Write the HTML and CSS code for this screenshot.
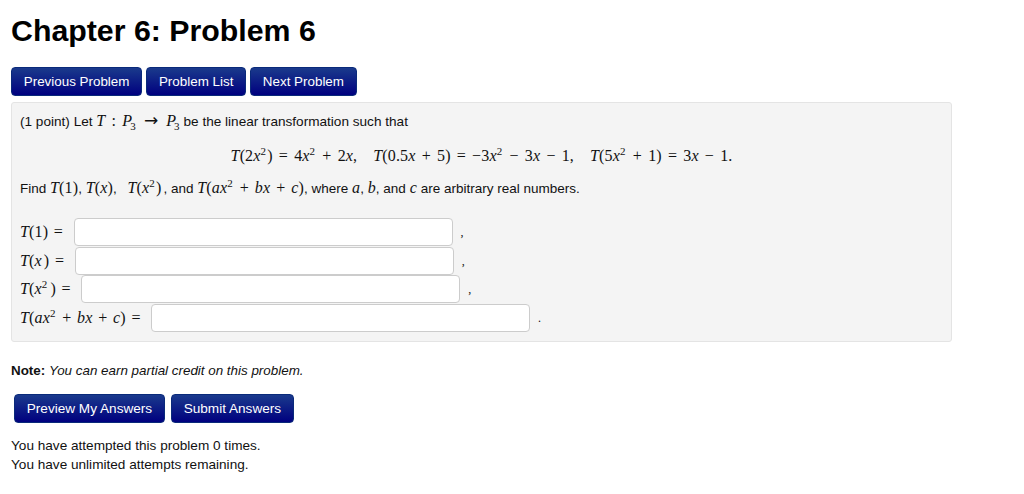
FILE: index.html
```html
<!DOCTYPE html>
<html lang="en">
<head>
  <meta charset="UTF-8">
  <title>Chapter 6: Problem 6</title>
  <link rel="stylesheet" href="styles.css">
</head>
<body>
  <h1>Chapter 6: Problem 6</h1>

  <div class="nav">
    <a class="btn">Previous Problem</a>
    <a class="btn">Problem List</a>
    <a class="btn">Next Problem</a>
  </div>

  <div class="problem">
    <p class="intro">(1 point) Let <span class="math"><i>T</i> <span class="colon">:</span> <i>P</i><sub>3</sub> <span class="arrow">→</span> <i>P</i><sub>3</sub></span> be the linear transformation such that</p>
    <p class="display math"><i>T</i>(2<i>x</i><sup>2</sup>) = 4<i>x</i><sup>2</sup> + 2<i>x</i>,<span class="sp"></span><i>T</i>(0.5<i>x</i> + 5) = −3<i>x</i><sup>2</sup> − 3<i>x</i> − 1,<span class="sp"></span><i>T</i>(5<i>x</i><sup>2</sup> + 1) = 3<i>x</i> − 1.</p>
    <p class="find">Find <span class="math"><i>T</i>(1)</span>, <span class="math"><i>T</i>(<i>x</i>)</span>, <span class="math wide"><i>T</i>(<i>x</i><sup>2</sup>)</span>, and <span class="math"><i>T</i>(<i>ax</i><sup>2</sup> + <i>bx</i> + <i>c</i>)</span>, where <span class="math"><i>a</i></span>, <span class="math"><i>b</i></span>, and <span class="math"><i>c</i></span> are arbitrary real numbers.</p>

    <div class="answers">
      <div class="answer"><span class="math"><i>T</i>(1) =</span><input type="text"><span class="punct math">,</span></div>
      <div class="answer"><span class="math"><i>T</i>(<i class="ic">x</i>) =</span><input type="text"><span class="punct math">,</span></div>
      <div class="answer"><span class="math"><i>T</i>(<i>x</i><sup class="ic">2</sup>) =</span><input type="text"><span class="punct math">,</span></div>
      <div class="answer"><span class="math"><i>T</i>(<i>ax</i><sup>2</sup> + <i>bx</i> + <i>c</i>) =</span><input type="text"><span class="punct math">.</span></div>
    </div>
  </div>

  <p class="note"><b>Note:</b> <i>You can earn partial credit on this problem.</i></p>

  <div class="submit">
    <a class="btn">Preview My Answers</a>
    <a class="btn">Submit Answers</a>
  </div>

  <p class="attempts">You have attempted this problem 0 times.<br>You have unlimited attempts remaining.</p>
</body>
</html>
```
FILE: styles.css
```css
body {
  font-family: "Liberation Sans", Arial, sans-serif;
  font-size: 13.6px;
  color: #111;
  background: #fff;
  margin: 0;
  padding: 0 72px 0 11px;
}
h1 {
  font-size: 30.3px;
  line-height: 36px;
  font-weight: 700;
  color: #000;
  margin: 0;
  padding-top: 13px;
}
p { margin: 0; }

/* Buttons */
.nav {
  display: flex;
  gap: 4px;
  margin-top: 18px;
}
.btn {
  display: block;
  height: 29px;
  line-height: 27px;
  padding: 0 11.75px;
  box-sizing: border-box;
  font-size: 13.4px;
  color: #fff;
  background: linear-gradient(#1a3a8c, #00007f);
  border: 1px solid #0a2a7a;
  border-radius: 4px;
  white-space: nowrap;
}
.submit .btn { font-size: 13.6px; padding: 0 11.75px; }

/* Problem box */
.problem {
  margin-top: 6px;
  height: 240px;
  box-sizing: border-box;
  padding: 10px 8px 0;
  background: #f4f4f4;
  border: 1px solid #e4e4e4;
  border-radius: 3px;
}
.intro { line-height: 18px; }

/* Math */
.math {
  font-family: "Liberation Serif", "Times New Roman", serif;
  font-size: 16px;
  line-height: 0;
  letter-spacing: 0.15px;
  word-spacing: 2px;
}
.math sub, .math sup { font-size: 11px; line-height: 0; }
.math sup { margin-right: 1px; }
.math sub { margin-left: -2px; }
.wide { margin: 0 2px 0 7px; }
.colon { margin: 0; }
.arrow { font-family: "DejaVu Sans", sans-serif; margin: 0 1.5px 0 2px; font-size: 17px; }
.display {
  line-height: 20px;
  text-align: center;
  margin-top: 15px;
}
.sp { display: inline-block; width: 16px; }
.find { line-height: 18px; margin-top: 14px; font-size: 13.5px; }
.find .math { word-spacing: 1.75px; }

/* Answer rows */
.answers {
  display: flex;
  flex-direction: column;
  gap: 0.7px;
  margin-top: 20px;
}
.answer {
  display: flex;
  align-items: center;
  height: 28px;
}
.answer .math { line-height: 20px; white-space: nowrap; word-spacing: 1.5px; }
.answer .ic { margin-right: 2px; }
.answer sup.ic { margin-right: 3px; }
.answer input {
  width: 379px;
  height: 28px;
  margin-left: 10.5px;
  box-sizing: border-box;
  background: #fff;
  border: 1px solid #ccc;
  border-radius: 4px;
  padding: 0 6px;
}
.answer .punct {
  margin-left: 8px;
  font-size: 12px;
}

.note { margin-top: 21px; line-height: 16px; font-size: 13.4px; }
.submit {
  display: flex;
  gap: 6px;
  margin-top: 15px;
  margin-left: 3px;
}
.attempts { margin-top: 13px; line-height: 19px; }
```
